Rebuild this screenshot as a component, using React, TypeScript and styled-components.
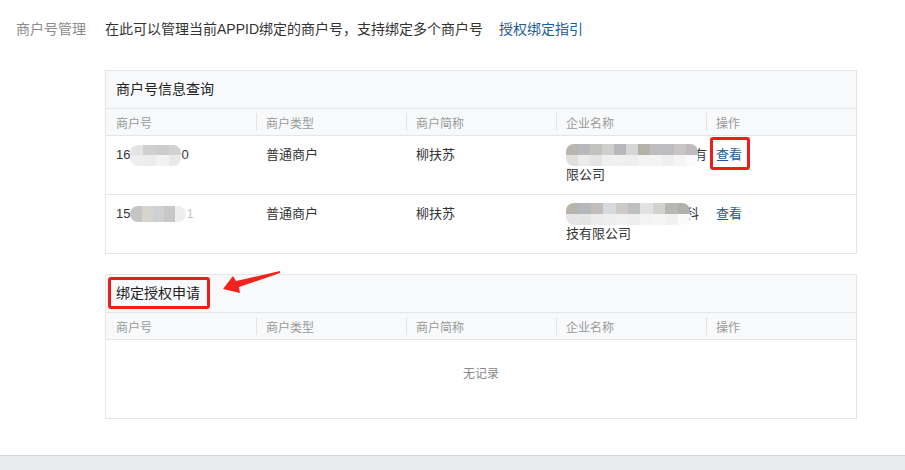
import React from 'react';
import styled, { createGlobalStyle } from 'styled-components';

const GlobalStyle = createGlobalStyle`
  html, body {
    margin: 0;
    padding: 0;
    background: #fff;
  }
  body {
    font-family: "Liberation Sans", Arial, "Noto Sans CJK SC", sans-serif;
    color: #333;
  }
`;

const Page = styled.div`
  display: flex;
  flex-direction: column;
  min-height: 100vh;
`;

const Main = styled.div`
  flex: 1;
  padding-top: 19px;
`;

const Footer = styled.div`
  height: 14px;
  background: #e9eaec;
  border-top: 1px solid #d6d7d9;
`;

const IntroRow = styled.div`
  display: flex;
  align-items: center;
  height: 20px;
  padding-left: 16px;
  font-size: 14px;
  line-height: 20px;
`;

const IntroLabel = styled.div`
  width: 89px;
  color: #8c8c8c;
`;

const IntroText = styled.div`
  color: #333;
`;

const Link = styled.a`
  color: #1b5c99;
  text-decoration: none;
  cursor: pointer;
  position: relative;
  display: inline-block;
`;

const IntroLink = styled(Link)`
  margin-left: 16px;
`;

const Content = styled.div`
  width: 752px;
  margin: 31px 0 0 105px;
  display: flex;
  flex-direction: column;
  gap: 20px;
`;

const Card = styled.div`
  border: 1px solid #e3e5e9;
  background: #fff;
`;

const CardTitle = styled.div`
  position: relative;
  height: 37px;
  line-height: 37px;
  padding-left: 10px;
  background: #f8f9fb;
  border-bottom: 1px solid #e3e5e9;
  font-size: 14px;
  color: #222;
`;

const Row = styled.div<{ $head?: boolean; $last?: boolean }>`
  display: grid;
  grid-template-columns: repeat(5, minmax(0, 1fr));
  background: ${(p) => (p.$head ? '#f8f9fb' : '#fff')};
  height: ${(p) => (p.$head ? '26px' : '58px')};
  border-bottom: ${(p) => (p.$last ? 'none' : '1px solid #e3e5e9')};
`;

const HeadCell = styled.div`
  position: relative;
  display: flex;
  align-items: center;
  padding-left: 10px;
  font-size: 12px;
  color: #999;

  &:not(:first-child)::before {
    content: '';
    position: absolute;
    left: 0;
    top: 4px;
    height: 18px;
    width: 1px;
    background: #e3e3e3;
  }
`;

const Cell = styled.div`
  padding: 9px 10px 0;
  font-size: 13px;
  line-height: 20px;
  color: #333;
`;

const Inline = styled.div`
  display: flex;
  align-items: center;
  height: 20px;
  white-space: nowrap;
`;

const Faded = styled.span`
  color: #c4c4c4;
`;

// the last visible character sits partly under the mosaic
const Tail = styled.span`
  margin-left: -4px;
`;

const Empty = styled.div`
  height: 78px;
  display: flex;
  align-items: center;
  justify-content: center;
  font-size: 12px;
  color: #888;
  padding-bottom: 14px;
  box-sizing: border-box;
`;

const MosaicBox = styled.span<{ $w: number; $h: number; $cols: number }>`
  position: relative;
  z-index: 1;
  display: inline-grid;
  grid-template-columns: repeat(${(p) => p.$cols}, 1fr);
  width: ${(p) => p.$w}px;
  height: ${(p) => p.$h}px;
  border-radius: 8px;
  overflow: hidden;
  filter: blur(0.4px);
  flex-shrink: 0;
`;

const Tile = styled.span<{ $c: string }>`
  background: ${(p) => p.$c};
`;

const Highlight = styled.span<{ $top: number; $left: number; $w: number; $h: number }>`
  position: absolute;
  top: ${(p) => p.$top}px;
  left: ${(p) => p.$left}px;
  width: ${(p) => p.$w}px;
  height: ${(p) => p.$h}px;
  border: 3px solid #f01c1c;
  border-radius: 3px;
  box-sizing: border-box;
  pointer-events: none;
`;

const Arrow = styled.svg`
  position: absolute;
  left: 112px;
  top: -7px;
  overflow: visible;
`;

const Mosaic = ({ w, h, cols, colors }: { w: number; h: number; cols: number; colors: string[] }) => (
  <MosaicBox $w={w} $h={h} $cols={cols}>
    {colors.map((c, i) => (
      <Tile key={i} $c={c} />
    ))}
  </MosaicBox>
);

const columns = ['商户号', '商户类型', '商户简称', '企业名称', '操作'];

const HeadRow = () => (
  <Row $head>
    {columns.map((c) => (
      <HeadCell key={c}>{c}</HeadCell>
    ))}
  </Row>
);

const App = () => {
  return (
    <Page>
      <GlobalStyle />
      <Main>
        <IntroRow>
          <IntroLabel>商户号管理</IntroLabel>
          <IntroText>在此可以管理当前APPID绑定的商户号，支持绑定多个商户号</IntroText>
          <IntroLink>授权绑定指引</IntroLink>
        </IntroRow>

        <Content>
          <Card>
            <CardTitle>商户号信息查询</CardTitle>
            <HeadRow />
            <Row>
              <Cell>
                <Inline>
                  16
                  <Mosaic
                    w={51}
                    h={21}
                    cols={4}
                    colors={['#e4e4e4', '#cfcfcf', '#cccccc', '#d2d2d2', '#eeeeee', '#ececec', '#f2f2f2', '#e9e9e9']}
                  />
                  0
                </Inline>
              </Cell>
              <Cell>普通商户</Cell>
              <Cell>柳扶苏</Cell>
              <Cell>
                <Inline>
                  <Mosaic
                    w={132}
                    h={22}
                    cols={11}
                    colors={[
                      '#b8b6ae', '#b9b9bd', '#c4c2c0', '#cdd0cc', '#b8b7bc', '#d5d6d5', '#b3b1a8', '#bdbdbf', '#bdbcbe', '#c9c5c4', '#c0bcbd',
                      '#e0dfdd', '#ececec', '#e4e4e4', '#efefef', '#f0f0f0', '#eeeeee', '#f3f3f3', '#f4f4f4', '#efefef', '#f5f5f5', '#fbfbfb',
                    ]}
                  />
                  <Tail>有</Tail>
                </Inline>
                <div>限公司</div>
              </Cell>
              <Cell>
                <Link>
                  查看
                  <Highlight $top={-8} $left={-6} $w={40} $h={33} />
                </Link>
              </Cell>
            </Row>
            <Row $last>
              <Cell>
                <Inline>
                  15
                  <Mosaic
                    w={56}
                    h={16}
                    cols={5}
                    colors={['#c5c6c4', '#d6d4cb', '#cfd0d4', '#c8c8c8', '#eeeeee']}
                  />
                  <Faded>1</Faded>
                </Inline>
              </Cell>
              <Cell>普通商户</Cell>
              <Cell>柳扶苏</Cell>
              <Cell>
                <Inline>
                  <Mosaic
                    w={124}
                    h={22}
                    cols={10}
                    colors={[
                      '#b6b4ab', '#b4b8bc', '#c2bdbb', '#d8d9de', '#cdc9c9', '#bdc2c0', '#e3e2e0', '#d4d2d0', '#b8b7b3', '#b1afae',
                      '#e6e6e6', '#e4e4e4', '#ececec', '#eeeeee', '#f0f0f0', '#eeeeee', '#f3f3f3', '#f5f5f5', '#f1f1f1', '#fafafa',
                    ]}
                  />
                  <Tail>科</Tail>
                </Inline>
                <div>技有限公司</div>
              </Cell>
              <Cell>
                <Link>查看</Link>
              </Cell>
            </Row>
          </Card>

          <Card>
            <CardTitle>
              绑定授权申请
              <Highlight $top={2} $left={2} $w={102} $h={32} />
              <Arrow width="66" height="28" viewBox="0 0 66 28">
                <polygon points="5,21 15,8 18,13 62,3 62,5 21,19 22,25" fill="#f2231d" />
              </Arrow>
            </CardTitle>
            <HeadRow />
            <Empty>无记录</Empty>
          </Card>
        </Content>
      </Main>
      <Footer />
    </Page>
  );
};

export default App;
